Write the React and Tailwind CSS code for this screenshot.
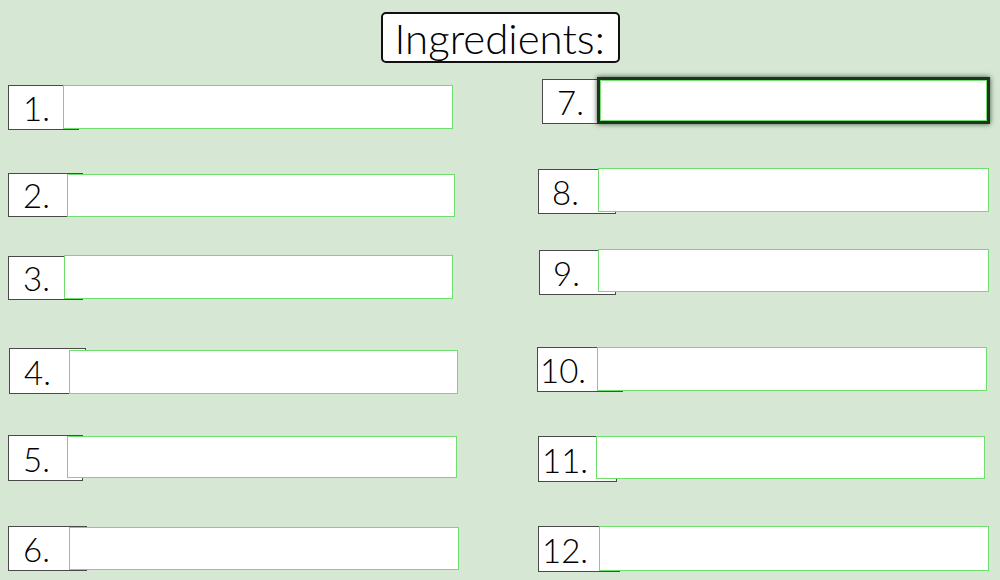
import React from 'react'

const leftRows = [
  { n: '1.', row: 'mt-[22px] ml-[8px]', label: 'w-[71px] h-[45px] pl-[14px]', input: 'ml-[-16px] mt-0 w-[390px] h-[44px]' },
  { n: '2.', row: 'mt-[43px] ml-[8px]', label: 'w-[75px] h-[44px] pl-[14px]', input: 'ml-[-16px] mt-[1px] w-[388px] h-[43px]' },
  { n: '3.', row: 'mt-[39px] ml-[8px]', label: 'w-[75px] h-[44px] pl-[14px]', input: 'ml-[-19px] mt-[-1px] w-[389px] h-[44px]' },
  { n: '4.', row: 'mt-[48px] ml-[9px]', label: 'w-[77px] h-[46px] pl-[14px]', input: 'ml-[-17px] mt-[2px] w-[389px] h-[44px]' },
  { n: '5.', row: 'mt-[41px] ml-[8px]', label: 'w-[75px] h-[46px] pl-[14px]', input: 'ml-[-16px] mt-[1px] w-[390px] h-[42px]' },
  { n: '6.', row: 'mt-[45px] ml-[8px]', label: 'w-[79px] h-[45px] pl-[14px]', input: 'ml-[-18px] mt-[1px] w-[390px] h-[43px]' },
]

const rightRows = [
  { n: '7.', row: 'mt-[16px] ml-[5px]', label: 'w-[75px] h-[45px] pl-[14px]', input: 'ml-[-20px] mt-[-2px] w-[393px] h-[47px]', focused: true },
  { n: '8.', row: 'mt-[45px] ml-[1px]', label: 'w-[78px] h-[45px] pl-[13px]', input: 'ml-[-18px] mt-[-1px] w-[391px] h-[44px]' },
  { n: '9.', row: 'mt-[36px] ml-[2px]', label: 'w-[77px] h-[45px] pl-[13px]', input: 'ml-[-18px] mt-[-1px] w-[391px] h-[43px]' },
  { n: '10.', row: 'mt-[52px] ml-0', label: 'w-[86px] h-[45px] pl-[2px]', input: 'ml-[-26px] mt-0 w-[390px] h-[44px]' },
  { n: '11.', row: 'mt-[44px] ml-[1px]', label: 'w-[79px] h-[46px] pl-[3px]', input: 'ml-[-21px] mt-0 w-[389px] h-[43px]' },
  { n: '12.', row: 'mt-[44px] ml-[1px]', label: 'w-[82px] h-[46px] pl-[3px]', input: 'ml-[-21px] mt-0 w-[390px] h-[45px]' },
]

const Row = ({ n, row, label, input, focused }) => {
  return (
    <div className={`flex items-start ${row}`}>
      <div className={`shrink-0 flex items-end pb-[4px] bg-white border border-[#4a4a4a] text-[33px] font-light leading-none text-black ${label}`}>
        {n}
      </div>
      <input
        type="text"
        aria-label={`Ingredient ${n}`}
        className={
          focused
            ? `shrink-0 bg-white border-[3px] border-[#1d351b] shadow-[0_0_5px_rgba(20,40,20,0.8),inset_0_0_0_1px_#74e074] outline-none ${input}`
            : `shrink-0 bg-white border border-[#6fde6f] outline-none ${input}`
        }
      />
    </div>
  )
}

const App = () => {
  return (
    <div className="w-[1000px] h-[580px] overflow-hidden bg-[#d6e8d3] font-['Lato',sans-serif]">
      <div className="flex justify-center pt-[12px]">
        <div className="w-[239px] h-[51px] flex items-center pl-[12px] bg-white border-2 border-[#111] rounded-[5px] text-[42px] font-light leading-none text-black">
          Ingredients:
        </div>
      </div>
      <div className="flex">
        <div className="w-[537px] flex flex-col">
          {leftRows.map((r) => (
            <Row key={r.n} {...r} />
          ))}
        </div>
        <div className="flex flex-col">
          {rightRows.map((r) => (
            <Row key={r.n} {...r} />
          ))}
        </div>
      </div>
    </div>
  )
}

export default App
